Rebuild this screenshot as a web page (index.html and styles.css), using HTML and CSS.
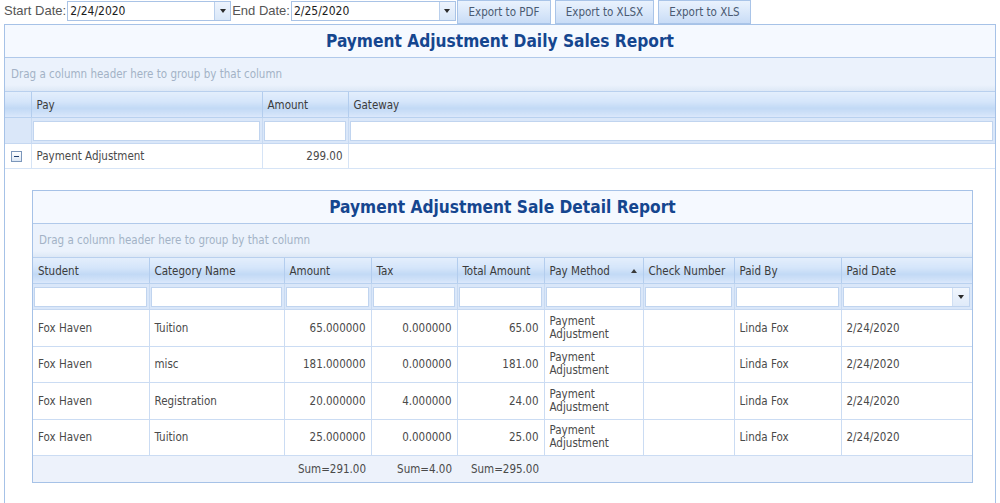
FILE: index.html
```html
<!DOCTYPE html>
<html>
<head>
<meta charset="utf-8">
<link rel="stylesheet" href="styles.css">
</head>
<body>
<div class="toolbar">
  <span class="lbl">Start Date:</span>
  <div class="combo combo-start"><span class="combo-text">2/24/2020</span><span class="combo-btn"><span class="tri"></span></span></div>
  <span class="lbl">End Date:</span>
  <div class="combo combo-end"><span class="combo-text">2/25/2020</span><span class="combo-btn"><span class="tri"></span></span></div>
  <button class="btn btn-pdf">Export to PDF</button>
  <button class="btn btn-xlsx">Export to XLSX</button>
  <button class="btn btn-xls">Export to XLS</button>
</div>

<div class="grid outer">
  <div class="grid-title">Payment Adjustment Daily Sales Report</div>
  <div class="group-panel">Drag a column header here to group by that column</div>
  <table class="gt">
    <colgroup><col class="c-ind"><col class="c-pay"><col class="c-amt"><col class="c-gw"></colgroup>
    <tr class="hdr">
      <td class="ind"></td><td>Pay</td><td>Amount</td><td>Gateway</td>
    </tr>
    <tr class="flt">
      <td class="ind"></td>
      <td><div class="fbox"></div></td>
      <td><div class="fbox"></div></td>
      <td><div class="fbox"></div></td>
    </tr>
    <tr class="grp">
      <td class="ind grp-ind"><span class="minus"></span></td>
      <td class="grp-name">Payment Adjustment</td>
      <td class="num">299.00</td>
      <td></td>
    </tr>
    <tr class="detail">
      <td class="ind-empty"></td>
      <td colspan="3" class="detail-cell">
        <div class="grid inner">
          <div class="grid-title">Payment Adjustment Sale Detail Report</div>
          <div class="group-panel">Drag a column header here to group by that column</div>
          <table class="gt">
            <colgroup>
              <col class="i1"><col class="i2"><col class="i3"><col class="i4"><col class="i5"><col class="i6"><col class="i7"><col class="i8"><col class="i9">
            </colgroup>
            <tr class="hdr">
              <td>Student</td><td>Category Name</td><td>Amount</td><td>Tax</td><td>Total Amount</td>
              <td class="sorted">Pay Method<span class="sort-up"></span></td>
              <td>Check Number</td><td>Paid By</td><td>Paid Date</td>
            </tr>
            <tr class="flt">
              <td><div class="fbox"></div></td><td><div class="fbox"></div></td><td><div class="fbox"></div></td>
              <td><div class="fbox"></div></td><td><div class="fbox"></div></td><td><div class="fbox"></div></td>
              <td><div class="fbox"></div></td><td><div class="fbox"></div></td>
              <td><div class="fbox fcombo"><span class="fcombo-btn"><span class="tri"></span></span></div></td>
            </tr>
            <tr class="row">
              <td>Fox Haven</td><td>Tuition</td><td class="num">65.000000</td><td class="num">0.000000</td><td class="num">65.00</td>
              <td class="wrap">Payment Adjustment</td><td></td><td>Linda Fox</td><td>2/24/2020</td>
            </tr>
            <tr class="row">
              <td>Fox Haven</td><td>misc</td><td class="num">181.000000</td><td class="num">0.000000</td><td class="num">181.00</td>
              <td class="wrap">Payment Adjustment</td><td></td><td>Linda Fox</td><td>2/24/2020</td>
            </tr>
            <tr class="row">
              <td>Fox Haven</td><td>Registration</td><td class="num">20.000000</td><td class="num">4.000000</td><td class="num">24.00</td>
              <td class="wrap">Payment Adjustment</td><td></td><td>Linda Fox</td><td>2/24/2020</td>
            </tr>
            <tr class="row">
              <td>Fox Haven</td><td>Tuition</td><td class="num">25.000000</td><td class="num">0.000000</td><td class="num">25.00</td>
              <td class="wrap">Payment Adjustment</td><td></td><td>Linda Fox</td><td>2/24/2020</td>
            </tr>
            <tr class="foot">
              <td></td><td></td><td class="num">Sum=291.00</td><td class="num">Sum=4.00</td><td class="num">Sum=295.00</td>
              <td></td><td></td><td></td><td></td>
            </tr>
          </table>
        </div>
      </td>
    </tr>
  </table>
</div>
</body>
</html>
```
FILE: styles.css
```css
html, body {
  margin: 0;
  padding: 0;
  background: #ffffff;
}

body {
  font-family: "DejaVu Sans Condensed", "DejaVu Sans", "Liberation Sans", sans-serif;
  font-stretch: condensed;
  font-size: 11.5px;
  color: #4a4a4a;
}

/* ---------- toolbar ---------- */
.toolbar {
  display: flex;
  align-items: flex-start;
  height: 24px;
  padding-left: 4px;
}

.lbl {
  font-family: "Liberation Sans", Arial, sans-serif;
  font-stretch: normal;
  font-size: 13px;
  color: #555555;
  line-height: 22px;
  margin-right: 1px;
}

.combo {
  display: flex;
  height: 18px;
  margin-top: 1px;
  border: 1px solid #a9c3e6;
  background: #ffffff;
}

.combo-start { width: 162px; margin-right: 1px; }
.combo-end { width: 163px; margin-right: 1px; }

.combo-text {
  flex: 1;
  padding-left: 2px;
  font-family: "DejaVu Sans Condensed", "DejaVu Sans", sans-serif;
  font-size: 12px;
  line-height: 18px;
  color: #1c1c1c;
}

.combo-btn {
  width: 15px;
  border-left: 1px solid #b9cfec;
  background: linear-gradient(#eef4fd, #d9e7f8);
  display: flex;
  align-items: center;
  justify-content: center;
}

.tri {
  width: 0;
  height: 0;
  border-left: 3.5px solid transparent;
  border-right: 3.5px solid transparent;
  border-top: 4px solid #2b2b2b;
}

.btn {
  height: 24px;
  margin: 0;
  padding: 0;
  border: 1px solid #a9c4e8;
  background: linear-gradient(#eaf2fd 0%, #dae8fa 50%, #c9dcf6 100%);
  font-family: "DejaVu Sans Condensed", "DejaVu Sans", sans-serif;
  font-stretch: condensed;
  font-size: 11.5px;
  color: #4a5a72;
}

.btn-pdf { width: 94px; }
.btn-xlsx { width: 99px; margin-left: 4px; }
.btn-xls { width: 93px; margin-left: 4px; }

/* ---------- grid ---------- */
.grid {
  border: 1px solid #a6c2e7;
  background: #ffffff;
}

.outer {
  margin-left: 4px;
  width: 990px;
  min-height: 490px;
  border-bottom: none;
}

.inner {
  width: 939px;
}

.grid-title {
  height: 32px;
  line-height: 32px;
  text-align: center;
  background: #f5f9ff;
  border-bottom: 1px solid #b0c9ea;
  font-family: "DejaVu Sans", sans-serif;
  font-stretch: condensed;
  font-weight: bold;
  font-size: 17.2px;
  color: #15468f;
}

.group-panel {
  height: 33px;
  line-height: 32px;
  padding-left: 6px;
  background: linear-gradient(#ebf2fc 0%, #ebf2fc 82%, #dde8f6 100%);
  border-bottom: 1px solid #b9d0ee;
  color: #a3b2c6;
}

.gt {
  border-collapse: collapse;
  table-layout: fixed;
  width: 100%;
}

.gt td {
  padding: 0 5px;
  white-space: nowrap;
  overflow: hidden;
}

.c-ind { width: 26px; }
.c-pay { width: 231px; }
.c-amt { width: 86px; }
.c-gw { width: auto; }

.i1 { width: 116px; }
.i2 { width: 135px; }
.i3 { width: 87px; }
.i4 { width: 86px; }
.i5 { width: 87px; }
.i6 { width: 99px; }
.i7 { width: 91px; }
.i8 { width: 107px; }
.i9 { width: auto; }

.hdr td {
  height: 25px;
  background: linear-gradient(#e3eefc 0%, #d4e5fa 40%, #c2d9f5 65%, #d2e3f9 90%, #dbe8fb 100%);
  border-left: 1px solid #b3cdee;
  border-bottom: 1px solid #b9d1ef;
  color: #3b3b3b;
}

.hdr td:first-child { border-left: none; }

.sorted { position: relative; }

.sort-up {
  position: absolute;
  right: 6px;
  top: 11px;
  width: 0;
  height: 0;
  border-left: 3.5px solid transparent;
  border-right: 3.5px solid transparent;
  border-bottom: 4px solid #3a3a3a;
}

.flt td {
  height: 25px;
  padding: 0 1px;
  background: #dae7f9;
  border-left: 1px solid #c8daf2;
  border-bottom: 1px solid #c6d8f1;
}

.flt td:first-child { border-left: none; }

.fbox {
  height: 18px;
  border: 1px solid #c0d4ef;
  background: #ffffff;
  margin: 0 1px 0 0;
}

.fcombo {
  display: flex;
  justify-content: flex-end;
}

.fcombo-btn {
  width: 16px;
  display: flex;
  align-items: center;
  justify-content: center;
  background: linear-gradient(#f1f6fd, #dfeaf9);
  border-left: 1px solid #d0dff3;
}

.grp td {
  height: 24px;
  border-bottom: 1px solid #d6e4f6;
  border-left: 1px solid #d6e4f6;
  color: #4a4a4a;
}

.grp td.grp-ind { border-left: none; padding: 0 0 0 6px; }

.minus {
  display: block;
  width: 9px;
  height: 9px;
  border: 1px solid #7c97bb;
  background: linear-gradient(#ffffff, #dce7f5);
  position: relative;
}

.minus::after {
  content: "";
  position: absolute;
  left: 2px;
  top: 4px;
  width: 5px;
  height: 1px;
  background: #1f3d6c;
}

.num { text-align: right; }

.ind { background: transparent; }

.ind-empty { padding: 0; }

.detail-cell {
  padding: 21px 0 40px 1px !important;
  vertical-align: top;
}

.row td {
  height: 35.5px;
  border-left: 1px solid #cbdcf3;
  border-bottom: 1px solid #cbdcf3;
  color: #4a4a4a;
}

.row td:first-child { border-left: none; }

.row td.wrap {
  white-space: normal;
  line-height: 13px;
  padding-top: 0;
  padding-right: 2px;
}

.foot td {
  height: 26px;
  background: #edf2fb;
  color: #4a4a4a;
}
```
